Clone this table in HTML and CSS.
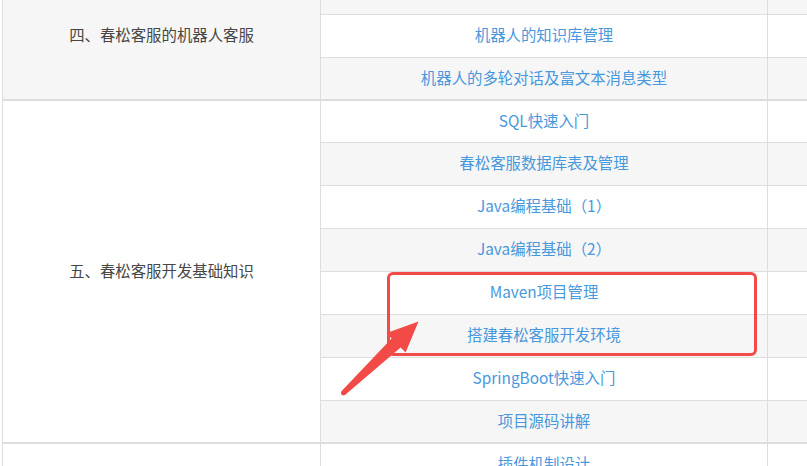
FILE: index.html
```html
<!DOCTYPE html>
<html lang="zh-CN">
<head>
<meta charset="utf-8">
<title>春松客服课程</title>
<link rel="stylesheet" href="styles.css">
</head>
<body>
<div class="table">
  <div class="group">
    <div class="cat gray">四、春松客服的机器人客服</div>
    <div class="rows">
      <div class="row gray"><a class="lesson top">机器人客服的配置</a><div class="extra"></div></div>
      <div class="row"><a class="lesson">机器人的知识库管理</a><div class="extra"></div></div>
      <div class="row gray"><a class="lesson">机器人的多轮对话及富文本消息类型</a><div class="extra"></div></div>
    </div>
  </div>
  <div class="group">
    <div class="cat">五、春松客服开发基础知识</div>
    <div class="rows">
      <div class="row"><a class="lesson">SQL快速入门</a><div class="extra"></div></div>
      <div class="row gray"><a class="lesson">春松客服数据库表及管理</a><div class="extra"></div></div>
      <div class="row"><a class="lesson">Java编程基础（1）</a><div class="extra"></div></div>
      <div class="row gray"><a class="lesson">Java编程基础（2）</a><div class="extra"></div></div>
      <div class="row"><a class="lesson">Maven项目管理</a><div class="extra"></div></div>
      <div class="row gray"><a class="lesson">搭建春松客服开发环境</a><div class="extra"></div></div>
      <div class="row"><a class="lesson">SpringBoot快速入门</a><div class="extra"></div></div>
      <div class="row gray"><a class="lesson">项目源码讲解</a><div class="extra"></div></div>
    </div>
  </div>
  <div class="group">
    <div class="cat">六、春松客服插件开发</div>
    <div class="rows">
      <div class="row"><a class="lesson">插件机制设计</a><div class="extra"></div></div>
      <div class="row gray"><a class="lesson">插件开发实战</a><div class="extra"></div></div>
      <div class="row"><a class="lesson">插件的发布与安装</a><div class="extra"></div></div>
      <div class="row gray"><a class="lesson">插件开发案例</a><div class="extra"></div></div>
    </div>
  </div>
</div>
<div class="highlight"></div>
<svg class="arrow" width="807" height="466" viewBox="0 0 807 466">
  <path d="M341.4 391.2 L391.6 338.6 L386.6 333.0 L418.5 321.5 L405.6 352.6 L400.6 347.4 L345.0 395.0 Q342.6 396.0 341.4 394.6 Q340.4 393.0 341.4 391.2 Z" fill="#f24b47"/>
</svg>
</body>
</html>
```

FILE: styles.css
```css
html, body {
  margin: 0;
  padding: 0;
  background: #fff;
  overflow: hidden;
}

body {
  width: 807px;
  height: 466px;
  font-family: "Noto Sans CJK SC", "Noto Sans", sans-serif;
  font-size: 15.4px;
}

.table {
  margin-top: -29px;
  margin-left: 2px;
  width: 880px;
  border-left: 1px solid #dddddd;
}

.group {
  display: flex;
  border-top: 2px solid #dddddd;
}

.cat {
  width: 318px;
  flex: 0 0 318px;
  box-sizing: border-box;
  padding-bottom: 4px;
  border-right: 1px solid #dddddd;
  display: flex;
  align-items: center;
  justify-content: center;
  color: #474747;
  background: #fff;
}

.rows {
  flex: 1;
  display: flex;
  flex-direction: column;
}

.row {
  display: flex;
  box-sizing: border-box;
  height: 43px;
  border-top: 1px solid #dddddd;
  background: #fff;
}

.row:first-child {
  border-top: none;
  height: 41px;
}

.row:last-child {
  height: 42px;
}

.gray {
  background: #f6f6f6;
}

.lesson {
  width: 447px;
  flex: 0 0 447px;
  box-sizing: border-box;
  padding-bottom: 4px;
  border-right: 1px solid #dddddd;
  display: flex;
  align-items: center;
  justify-content: center;
  color: #4898dd;
  text-decoration: none;
}

.lesson.top {
  padding-bottom: 8px;
}

.extra {
  flex: 1;
}

.highlight {
  position: absolute;
  left: 387px;
  top: 272px;
  width: 370px;
  height: 84px;
  box-sizing: border-box;
  border: 3px solid #f24b47;
  border-radius: 6px;
}

.arrow {
  position: absolute;
  left: 0;
  top: 0;
  pointer-events: none;
}
```
